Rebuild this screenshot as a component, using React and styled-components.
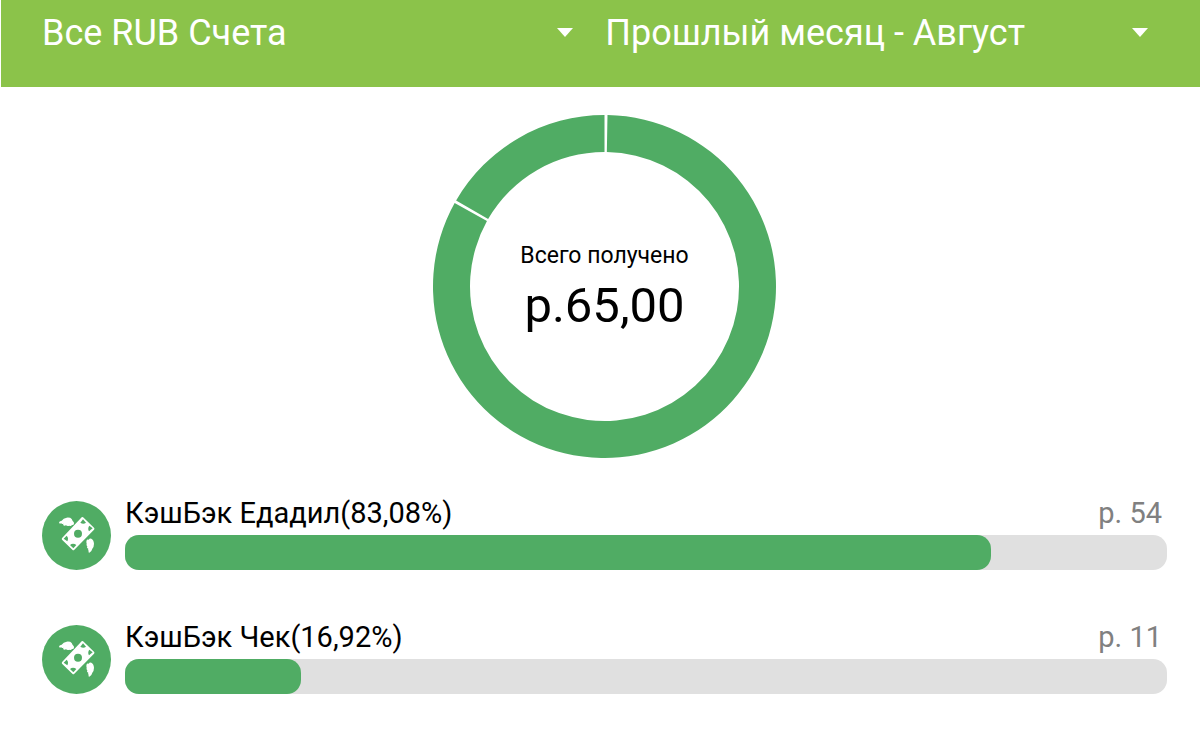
import React, { useState } from "react";
import styled, { createGlobalStyle } from "styled-components";

const GlobalStyle = createGlobalStyle`
    * {
        box-sizing: border-box;
    }

    body {
        margin: 0;
        background-color: #ffffff;
        color: #000000;
        font-family: Roboto, "Noto Sans", sans-serif;
    }
`;

const StyledHeader = styled.header`
    display: grid;
    grid-template-columns: 49fr 50fr;
    height: 87px;
    margin-left: 1px;
    padding-left: 41px;
    padding-right: 20px;
    background-color: #8bc34a;
`;

const StyledPicker = styled.label`
    display: flex;
    align-items: center;
    height: 64px;
    padding-right: 32px;
`;

const StyledSelect = styled.select`
    flex: 1;
    min-width: 0;
    height: 64px;
    padding: 2px 0 0;
    border: none;
    appearance: none;
    background: transparent;
    color: #ffffff;
    font-family: inherit;
    font-size: 36px;

    option {
        color: #000000;
    }
`;

const StyledArrow = styled.svg`
    width: 16px;
    height: 9px;
    fill: #ffffff;
    pointer-events: none;
`;

const StyledMain = styled.main`
    padding: 28px 33px 0 42px;
`;

const StyledChart = styled.section`
    display: grid;
    place-items: center;
    margin-bottom: 38px;

    > * {
        grid-area: 1 / 1;
    }
`;

const StyledDonut = styled.svg`
    width: 343px;
    height: 343px;
    fill: #50ac64;
`;

const StyledTotal = styled.div`
    padding-top: 6px;
    text-align: center;
`;

const StyledTotalLabel = styled.p`
    margin: 0;
    font-size: 23px;
    line-height: 32px;
`;

const StyledTotalValue = styled.p`
    margin: 0;
    font-size: 49px;
    line-height: 68px;
`;

const StyledList = styled.ul`
    display: grid;
    gap: 50px;
    margin: 0;
    padding: 0;
    list-style: none;
`;

const StyledItem = styled.li`
    display: flex;
    align-items: flex-end;
    gap: 14px;
`;

const StyledBadge = styled.svg`
    flex: none;
    width: 69px;
    height: 69px;
`;

const StyledItemBody = styled.div`
    flex: 1;
`;

const StyledItemText = styled.div`
    display: flex;
    justify-content: space-between;
    margin-bottom: 5px;
    padding-right: 5px;
    font-size: 29px;
    line-height: 34px;
`;

const StyledAmount = styled.span`
    color: #808080;
`;

const StyledTrack = styled.div`
    height: 35px;
    border-radius: 14px;
    background-color: #e0e0e0;
`;

const StyledFill = styled.div`
    height: 100%;
    border-radius: 14px;
    background-color: #50ac64;
`;

const accounts = ["Все RUB Счета"];
const periods = ["Прошлый месяц - Август"];

const incomes = [
    { name: "КэшБэк Едадил", label: "83,08%", percent: 83.08, amount: "р. 54" },
    { name: "КэшБэк Чек", label: "16,92%", percent: 16.92, amount: "р. 11" },
];

const CENTER = 171.5;
const OUTER = 171.5;
const INNER = 134.5;

// point on a circle, angle goes clockwise from the top
const point = (radius, angle) => {
    const rad = (angle * Math.PI) / 180;
    return `${CENTER + radius * Math.sin(rad)} ${CENTER - radius * Math.cos(rad)}`;
};

const arc = (from, to) => {
    const large = to - from > 180 ? 1 : 0;
    return `M${point(OUTER, from)} A${OUTER} ${OUTER} 0 ${large} 1 ${point(OUTER, to)} L${point(INNER, to)} A${INNER} ${INNER} 0 ${large} 0 ${point(INNER, from)} Z`;
};

const Picker = ({ name, options }) => {
    const [value, setValue] = useState(options[0]);
    return <StyledPicker>
                <StyledSelect aria-label={name} value={value} onChange={(e) => setValue(e.target.value)}>
                    {options.map((option) => <option key={option}>{option}</option>)}
                </StyledSelect>
                <StyledArrow viewBox="0 0 16 9" aria-hidden="true">
                    <path d="M0 0H16L8 9Z" />
                </StyledArrow>
            </StyledPicker>
}

const Donut = () => {
    // 1 degree gap before each slice
    let start = 0;
    return <StyledDonut viewBox="0 0 343 343" aria-hidden="true">
                {incomes.map((income) => {
                    const end = start + income.percent * 3.6;
                    const d = arc(start + 1, end);
                    start = end;
                    return <path key={income.name} d={d} />;
                })}
            </StyledDonut>
}

// banknote with wings
const MoneyIcon = () => (
    <StyledBadge viewBox="18 21 207 207" aria-hidden="true">
        <circle cx="121.5" cy="124.5" r="103.5" fill="#50ac64" />
        <g fill="#ffffff">
            <path d="M137 70 Q140 68 143 71 L174 101 Q177 104 174 107 L115 167 Q112 170 109 167 L78 137 Q76 134 79 131 Z" />
            <path d="M69 86 Q69 81 77 80 Q82 72 92 71 Q103 70 107 75 L110 81 Q115 84 114 89 Q113 94 108 93 Q105 97 100 95 Q94 97 90 94 Q84 97 81 92 L83 89 Q77 92 76 88 Q71 90 69 86 Z" />
            <path d="M152 139 Q153 135 158 137 Q161 132 166 134 Q173 137 174 149 Q174 158 169 164 Q167 173 160 176 Q156 176 158 170 Q155 168 157 164 Q151 163 154 157 Q150 154 152 149 Q150 144 152 139 Z" />
        </g>
        <g fill="#50ac64">
            <circle cx="126" cy="119" r="12" />
            <path d="M141 76 L150 86 Q142 92 133 86 Z" />
            <path d="M170 103 L160 95 Q154 103 159 112 Z" />
            <path d="M83 134 L92 125 Q99 132 94 142 Z" />
            <path d="M112 163 L102 153 Q111 146 121 153 Z" />
        </g>
    </StyledBadge>
);

const App = () => (
    <>
        <GlobalStyle />
        <StyledHeader>
            <Picker name="Счет" options={accounts} />
            <Picker name="Период" options={periods} />
        </StyledHeader>
        <StyledMain>
            <StyledChart>
                <Donut />
                <StyledTotal>
                    <StyledTotalLabel>Всего получено</StyledTotalLabel>
                    <StyledTotalValue>р.65,00</StyledTotalValue>
                </StyledTotal>
            </StyledChart>
            <StyledList>
                {incomes.map((income) => (
                    <StyledItem key={income.name}>
                        <MoneyIcon />
                        <StyledItemBody>
                            <StyledItemText>
                                <span>{income.name}({income.label})</span>
                                <StyledAmount>{income.amount}</StyledAmount>
                            </StyledItemText>
                            <StyledTrack>
                                <StyledFill style={{ width: `${income.percent}%` }} />
                            </StyledTrack>
                        </StyledItemBody>
                    </StyledItem>
                ))}
            </StyledList>
        </StyledMain>
    </>
);

export default App
